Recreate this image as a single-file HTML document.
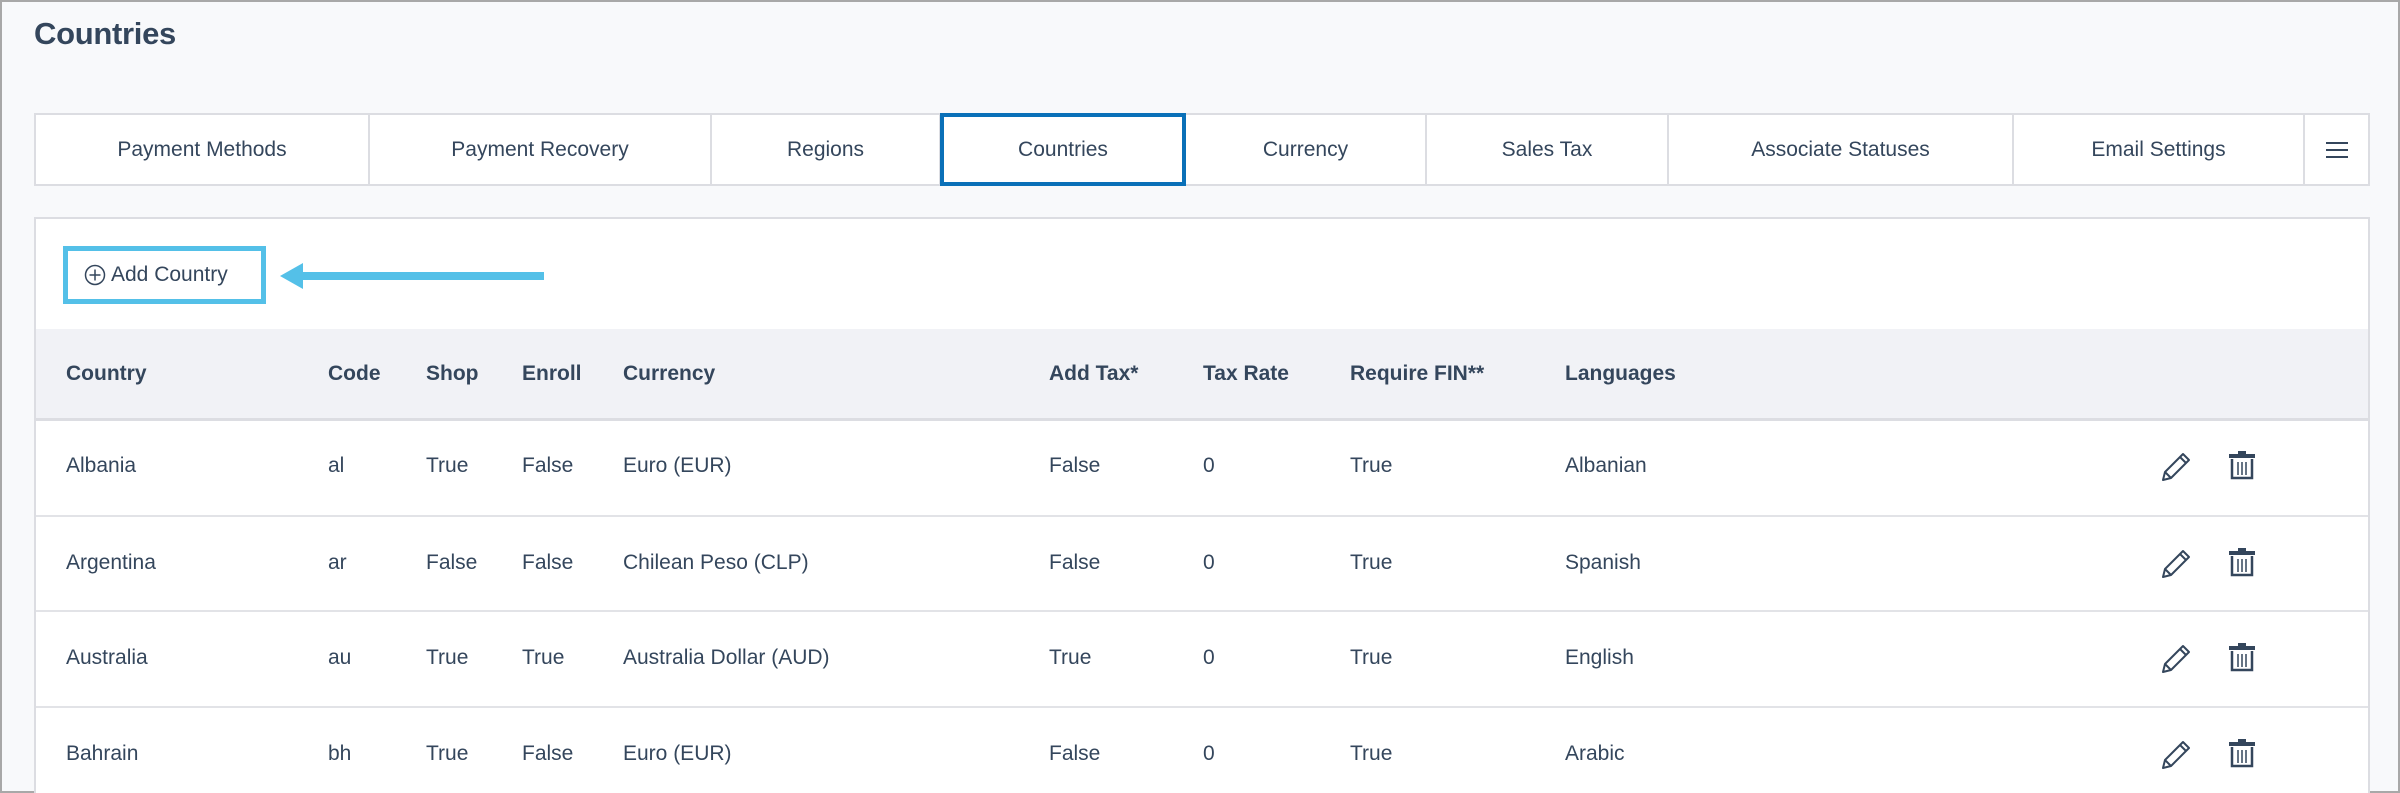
<!DOCTYPE html>
<html style="overflow:hidden;width:2400px;height:793px"><head><meta charset="utf-8"><style>
*{margin:0;padding:0;box-sizing:border-box}
body{width:2400px;height:793px;background:#f8f9fb;font-family:"Liberation Sans",sans-serif;color:#34465c;position:relative;overflow:hidden;border:2px solid #a8a8a8;}
.abs{position:absolute}
h1{position:absolute;left:32px;top:14px;font-size:31px;font-weight:bold;color:#34465c;letter-spacing:-0.3px}
.tabs{position:absolute;left:32px;top:111px;width:2336px;height:73px;background:#fff;border:2px solid #dcdde2}
.tab{position:absolute;top:0;height:69px;border-right:2px solid #dcdde2;display:flex;align-items:center;justify-content:center;font-size:21px;color:#34465c}
.tab.act{border:4px solid #0a70b8;top:-2px;height:73px}
.panel{position:absolute;left:32px;top:215px;width:2336px;height:600px;background:#fff;border:2px solid #dcdde2}
.btn{position:absolute;left:61px;top:244px;width:203px;height:58px;border:5px solid #54c0e8;background:#fff;font-size:21px;display:flex;align-items:center;padding-left:16px;color:#34465c}
.hdr{position:absolute;left:34px;top:327px;width:2332px;height:92px;background:#f1f2f6;border-bottom:3px solid #dcdde2}
.t{position:absolute;font-size:21px;transform:translateY(-50%);white-space:nowrap}
.b{font-weight:bold}
.line{position:absolute;left:34px;width:2332px;height:2px;background:#e2e3e7}
</style></head><body>
<h1>Countries</h1>
<div class="tabs">
<div class="tab" style="left:0;width:334px">Payment Methods</div>
<div class="tab" style="left:334px;width:342px">Payment Recovery</div>
<div class="tab" style="left:676px;width:229px">Regions</div>
<div class="tab act" style="left:904px;width:246px">Countries</div>
<div class="tab" style="left:1150px;width:241px">Currency</div>
<div class="tab" style="left:1391px;width:242px">Sales Tax</div>
<div class="tab" style="left:1633px;width:345px">Associate Statuses</div>
<div class="tab" style="left:1978px;width:291px">Email Settings</div>
<div class="tab" style="left:2269px;width:63px;border-right:none"><svg width="22" height="18"><path d="M0 2H22M0 9H22M0 16H22" stroke="#34465c" stroke-width="2"/></svg></div>
</div>
<div class="panel"></div>
<div class="btn"><svg width="22" height="22" style="margin-right:5px"><circle cx="11" cy="11" r="9.5" fill="none" stroke="#34465c" stroke-width="1.5"/><path d="M11 5.5V16.5M5.5 11H16.5" stroke="#34465c" stroke-width="1.5"/></svg>Add Country</div>
<svg class="abs" style="left:278px;top:260px" width="264" height="28"><path d="M0 14L23 1V27Z" fill="#54c0e8"/><rect x="20" y="10" width="244" height="8" fill="#54c0e8"/></svg>
<div class="hdr"></div>
<div class="line" style="top:513px"></div>
<div class="line" style="top:608px"></div>
<div class="line" style="top:704px"></div>
<div id="cells"></div>
<script>
var xs=[64,326,424,520,621,1047,1201,1348,1563];
var H=["Country","Code","Shop","Enroll","Currency","Add Tax*","Tax Rate","Require FIN**","Languages"];
var R=[["Albania","al","True","False","Euro (EUR)","False","0","True","Albanian"],
["Argentina","ar","False","False","Chilean Peso (CLP)","False","0","True","Spanish"],
["Australia","au","True","True","Australia Dollar (AUD)","True","0","True","English"],
["Bahrain","bh","True","False","Euro (EUR)","False","0","True","Arabic"]];
var ys=[464,561,656,752],h="";
H.forEach(function(t,i){h+='<div class="t b" style="left:'+xs[i]+'px;top:372px">'+t+'</div>'});
R.forEach(function(r,j){r.forEach(function(t,i){h+='<div class="t" style="left:'+xs[i]+'px;top:'+ys[j]+'px">'+t+'</div>'});
var y=ys[j]-15;
h+='<svg class="abs" style="left:2158px;top:'+(y)+'px" width="32" height="32"><path d="M3 29L5 21L23 3L29 9L11 27Z M5 21L11 27 M20 6L26 12" fill="none" stroke="#34465c" stroke-width="2" stroke-linejoin="round"/></svg>';
h+='<svg class="abs" style="left:2227px;top:'+(y)+'px" width="26" height="30"><rect x="0" y="3" width="26" height="4" fill="#34465c"/><rect x="9" y="0" width="8" height="4" fill="#34465c"/><path d="M3 8V27H23V8" fill="none" stroke="#34465c" stroke-width="2.5"/><path d="M9 11V24M13 11V24M17 11V24" stroke="#34465c" stroke-width="1.5"/></svg>';
});
document.getElementById("cells").innerHTML=h;
</script>
</body></html>
